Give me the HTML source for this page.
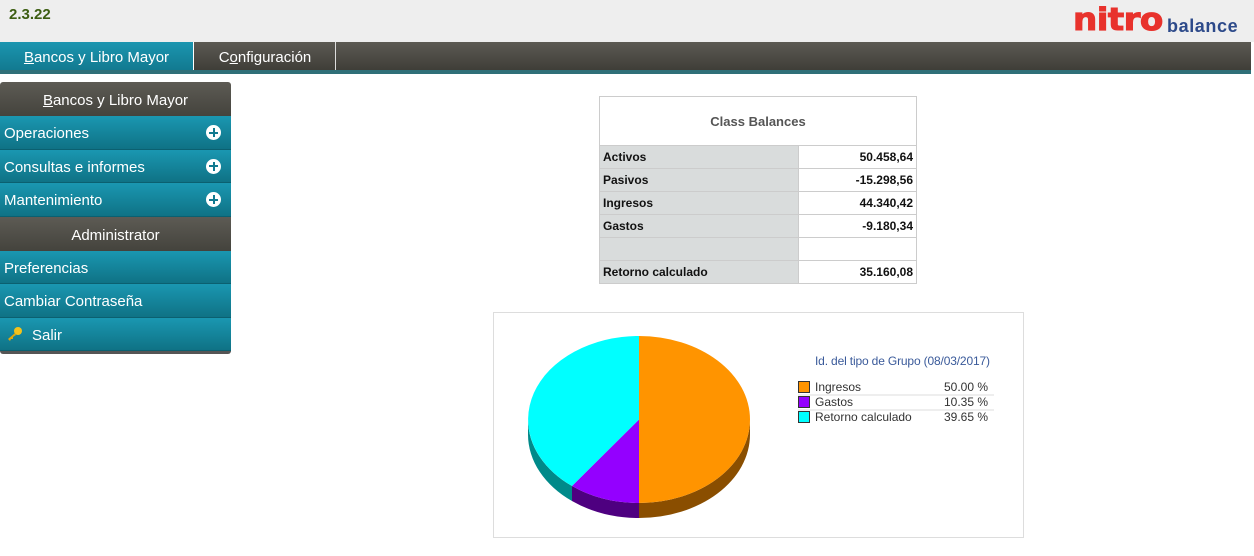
<!DOCTYPE html>
<html><head><meta charset="utf-8"><style>
*{margin:0;padding:0;box-sizing:border-box}
body{width:1254px;height:556px;background:#fff;font-family:"Liberation Sans",Arial,sans-serif;position:relative;overflow:hidden}
.top{position:absolute;left:0;top:0;width:1254px;height:42px;background:#eeeeee}
.ver{position:absolute;left:9px;top:6px;font-size:15px;font-weight:bold;color:#3d5e12}
.logo{position:absolute;left:1073px;top:2px;white-space:nowrap;height:38px}
.logo .n{position:absolute;left:0;top:0;font-size:31px;font-weight:bold;color:#e8322c;font-family:"DejaVu Sans","Liberation Sans",sans-serif;display:inline-block;transform:scaleX(1.1);transform-origin:left;line-height:36px;letter-spacing:-0.5px;-webkit-text-stroke:1px #e8322c}
.logo .b{position:absolute;left:94px;top:14px;font-size:18px;font-weight:bold;color:#2d4a8a;letter-spacing:0.6px}
.nav{position:absolute;left:0;top:42px;width:1251px;height:32px;background:linear-gradient(#5c5a53,#3f3e38);border-bottom:4px solid #2f6f78}
.tab{position:absolute;top:0;height:28px;line-height:32px;font-size:15px;color:#fff;text-align:center}
.t1{left:0;width:194px;background:linear-gradient(#1b96b0,#127a90);border-right:1px solid #fff}
.t2{left:195px;width:141px;border-right:1px solid #ddd}
.side{position:absolute;left:0;top:82px;width:231px}
.hd{height:34px;line-height:37px;text-align:center;color:#fff;font-size:15px;background:linear-gradient(#5d5b54,#44433d);border-radius:3px 3px 0 0}
.it{height:33.5px;line-height:35px;color:#fff;font-size:15px;padding-left:4px;background:linear-gradient(#1a97b1,#0f7285);border-bottom:1px solid #0b6070;position:relative}
.pl{position:absolute;right:10px;top:9px;width:15px;height:15px;border-radius:50%;background:#fff}
.pl:before{content:"";position:absolute;left:3px;top:6.5px;width:9px;height:2px;background:#127a90}
.pl:after{content:"";position:absolute;left:6.5px;top:3px;width:2px;height:9px;background:#127a90}
.foot{height:3px;background:#555;border-radius:0 0 3px 3px}
table{position:absolute;left:599px;top:96px;width:318px;border-collapse:collapse;font-size:12px;color:#111}
td{border:1px solid #ccc;height:23px;padding:0 3px}
td.l{background:#d9dcdc;font-weight:bold;width:199px}
td.r{text-align:right;font-weight:bold}
th{height:49px;border:1px solid #ccc;font-weight:bold;color:#555;font-size:13px;background:#fff}
.chart{position:absolute;left:493px;top:312px;width:531px;height:226px;border:1px solid #ddd}
</style></head><body>
<div class="top"><div class="ver">2.3.22</div>
<div class="logo"><span class="n">nitro</span><span class="b">balance</span></div></div>
<div class="nav"><div class="tab t1"><u>B</u>ancos y Libro Mayor</div><div class="tab t2">C<u>o</u>nfiguración</div></div>
<div class="side">
<div class="hd"><u>B</u>ancos y Libro Mayor</div>
<div class="it">Operaciones<span class="pl"></span></div>
<div class="it">Consultas e informes<span class="pl"></span></div>
<div class="it">Mantenimiento<span class="pl"></span></div>
<div class="hd" style="border-radius:0">Administrator</div>
<div class="it">Preferencias</div>
<div class="it">Cambiar Contraseña</div>
<div class="it"><svg width="18" height="16" style="position:absolute;left:5px;top:8px" viewBox="0 0 18 16"><circle cx="13" cy="5" r="4" fill="#f3c21b"/><path d="M10 7 L3 13 L5 15 L6 13 L8 13 L8 11 L11 9Z" fill="#e0a80c"/></svg><span style="margin-left:28px">Salir</span></div>
<div class="foot"></div>
</div>
<table>
<tr><th colspan="2">Class Balances</th></tr>
<tr><td class="l">Activos</td><td class="r">50.458,64</td></tr>
<tr><td class="l">Pasivos</td><td class="r">-15.298,56</td></tr>
<tr><td class="l">Ingresos</td><td class="r">44.340,42</td></tr>
<tr><td class="l">Gastos</td><td class="r">-9.180,34</td></tr>
<tr><td class="l"></td><td class="r"></td></tr>
<tr><td class="l">Retorno calculado</td><td class="r">35.160,08</td></tr>
</table>
<div class="chart"></div>
<svg style="position:absolute;left:0;top:0" width="1254" height="556">
<path d="M750,419.5 A111,83.5 0 0 1 639,503 L639,518 A111,83.5 0 0 0 750,434.5 Z" fill="#8a4e00"/>
<path d="M639,503 A111,83.5 0 0 1 572,486 L572,501 A111,83.5 0 0 0 639,518 Z" fill="#4e0080"/>
<path d="M572,486 A111,83.5 0 0 1 528,419.5 L528,434.5 A111,83.5 0 0 0 572,501 Z" fill="#008a8a"/>
<path d="M639,419.5 L639,336 A111,83.5 0 0 1 639,503 Z" fill="#ff9400"/>
<path d="M639,419.5 L639,503 A111,83.5 0 0 1 572,486 Z" fill="#9400ff"/>
<path d="M639,419.5 L572,486 A111,83.5 0 0 1 639,336 Z" fill="#00ffff"/>
<g font-family="Liberation Sans,sans-serif" font-size="12" fill="#333">
<text x="815" y="365" fill="#3a5a9a" textLength="175">Id. del tipo de Grupo (08/03/2017)</text>
<rect x="798.5" y="381.5" width="11" height="11" fill="#ff9400" stroke="#333"/>
<text x="815" y="391">Ingresos</text><text x="944" y="391">50.00 %</text>
<line x1="798" y1="395" x2="994" y2="395" stroke="#ddd"/>
<rect x="798.5" y="396.5" width="11" height="11" fill="#9400ff" stroke="#333"/>
<text x="815" y="406">Gastos</text><text x="944" y="406">10.35 %</text>
<line x1="798" y1="410" x2="994" y2="410" stroke="#ddd"/>
<rect x="798.5" y="411.5" width="11" height="11" fill="#00ffff" stroke="#333"/>
<text x="815" y="421">Retorno calculado</text><text x="944" y="421">39.65 %</text>
</g>
</svg>
</body></html>
